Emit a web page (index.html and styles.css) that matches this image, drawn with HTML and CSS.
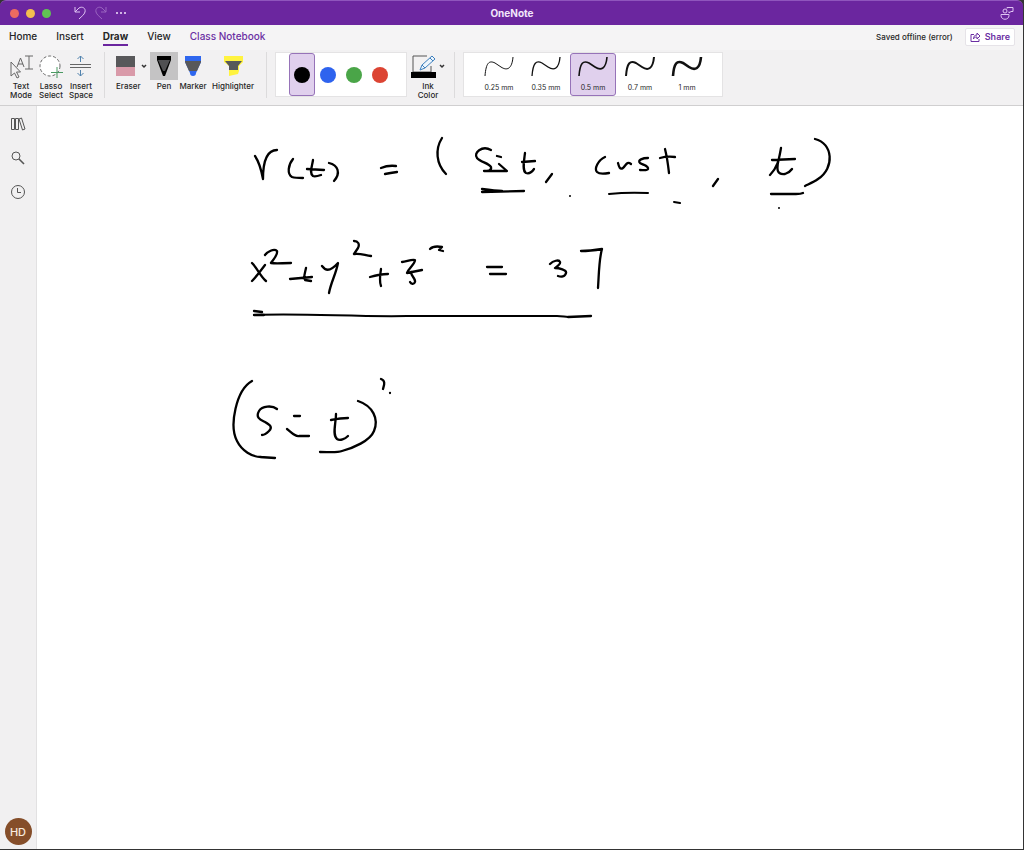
FILE: index.html
```html
<!DOCTYPE html>
<html lang="en">

<head>
    <meta charset="UTF-8">
    <meta name="viewport" content="width=device-width, initial-scale=1.0">
    <title>OneNote</title>
    <link rel="stylesheet" href="styles.css">
</head>

<body>
    <div class="window">
        <header class="titlebar">
            <div class="titlebar-left">
                <button class="light red" aria-label="Close"></button>
                <button class="light yellow" aria-label="Minimize"></button>
                <button class="light green" aria-label="Zoom"></button>
                <button class="undo" aria-label="Undo">
                    <svg width="14" height="16" viewBox="0 0 14 16"><path d="M2 2v5h5M2 7l4-4c3-2 7 0 6 4-1 3-3 4-6 7"/></svg>
                </button>
                <button class="redo" aria-label="Redo">
                    <svg width="14" height="16" viewBox="0 0 14 16"><path d="M12 2v5H7M12 7L8 3C5 1 1 3 2 7c1 3 3 4 6 7"/></svg>
                </button>
                <button class="more" aria-label="More">
                    <svg width="12" height="4" viewBox="0 0 12 4"><circle cx="2" cy="2" r="1"/><circle cx="6" cy="2" r="1"/><circle cx="10" cy="2" r="1"/></svg>
                </button>
            </div>
            <h1>OneNote</h1>
            <div class="titlebar-right">
                <button aria-label="Feedback">
                    <svg width="14" height="14" viewBox="0 0 14 14"><circle cx="5" cy="5" r="2"/><path d="M1 8.500h8v1c0 5-8 5-8 0zM7 1.500h6v4h-2L9 7V5.500M7 1.500v1"/></svg>
                </button>
            </div>
        </header>

        <nav class="tabs">
            <a href="#">Home</a>
            <a href="#">Insert</a>
            <a href="#" class="active">Draw</a>
            <a href="#">View</a>
            <a href="#" class="class-notebook">Class Notebook</a>
            <span class="status">Saved offline (error)</span>
            <button class="share">
                <svg width="11" height="10" viewBox="0 0 11 10"><path d="M4 2.500H1v7h8V7M7 1v2C4 3 3.500 5 3.500 7 4 5.500 5 5 7 5v2l3-3z"/></svg>
                Share
            </button>
        </nav>

        <div class="ribbon">
            <button class="tool">
                <svg width="28" height="28" viewBox="0 0 28 28" class="line"><path d="M4 10v14l3.500-3 2.500 5 2-1-2.500-5h4zM10 15l3.500-9 3.500 9M11 12h5M18 4h8M22 4v13M18 17h8"/></svg>
                <span>Text<br>Mode</span>
            </button>
            <button class="tool">
                <svg width="28" height="28" viewBox="0 0 28 28" class="line"><circle cx="13" cy="14" r="10" fill="#fff" stroke-dasharray="3 2"/><path d="M20 15v11M14 20.500h12" stroke="#4b9a63"/></svg>
                <span>Lasso<br>Select</span>
            </button>
            <button class="tool">
                <svg width="28" height="28" viewBox="0 0 28 28" class="line"><path d="M3 12.500h21M3 15.500h21"/><path d="M13.500 10V4m-3 3l3-3 3 3M13.500 18v6m-3-3l3 3 3-3" stroke="#5283ae"/></svg>
                <span>Insert<br>Space</span>
            </button>
            <div class="divider"></div>
            <button class="tool eraser">
                <svg width="34" height="28" viewBox="0 0 34 28"><path fill="#58585a" d="M0 4h19v11H0z"/><path fill="#d99aa9" d="M0 15h19v9H0z"/><path d="M26 13l2 2 2-2" fill="none" stroke="#333" stroke-width="1.500"/></svg>
                <span>Eraser</span>
            </button>
            <button class="tool pen">
                <svg width="28" height="28" viewBox="0 0 28 28" class="picked"><path d="M7 4h14v4l-6 16h-2L7 8z"/><path fill="#505052" d="M8 8h12l-5 11h-2z"/></svg>
                <span>Pen</span>
            </button>
            <button class="tool">
                <svg width="28" height="28" viewBox="0 0 28 28"><path fill="#2e66ee" d="M6 4h16v6l-5 11q0 3-3 3t-3-3L6 10z"/><path fill="#58585a" d="M6 9h16v1l-4 9h-8l-4-9z"/></svg>
                <span>Marker</span>
            </button>
            <button class="tool highlighter">
                <svg width="28" height="28" viewBox="0 0 28 28"><path fill="#fff33f" d="M5 4h19v6l-4 4v5l-1 3-9 2V14l-5-4z"/><path fill="#58585a" d="M6 9h17l-4 5v4h-9v-4z"/></svg>
                <span>Highlighter</span>
            </button>
            <div class="divider"></div>
            <div class="gallery colors">
                <button class="swatch selected" aria-label="Black"><i class="dot black"></i></button>
                <button class="swatch" aria-label="Blue"><i class="dot blue"></i></button>
                <button class="swatch" aria-label="Green"><i class="dot green"></i></button>
                <button class="swatch" aria-label="Red"><i class="dot red"></i></button>
            </div>
            <button class="tool ink-color">
                <svg width="36" height="28" viewBox="0 0 36 28"><path d="M17 4H3v16h18v-6" fill="none" stroke="#555"/><path d="M10 18l2-5L22 4l3 3-10 9zM20 6l3 3M12 13l3 3" fill="#edf5fc" stroke="#3d7fbd"/><path d="M1 20h25v6H1z"/><path d="M30 13l2 2 2-2" fill="none" stroke="#333" stroke-width="1.500"/></svg>
                <span>Ink<br>Color</span>
            </button>
            <div class="divider"></div>
            <div class="gallery widths">
                <button class="width">
                    <svg width="32" height="24" viewBox="0 0 32 24"><path d="M2 22C3 9 6 6 12 9l6 4c6 4 11 2 12-10" stroke-width="1"/></svg>
                    <span>0.25 mm</span>
                </button>
                <button class="width">
                    <svg width="32" height="24" viewBox="0 0 32 24"><path d="M2 22C3 9 6 6 12 9l6 4c6 4 11 2 12-10" stroke-width="1.300"/></svg>
                    <span>0.35 mm</span>
                </button>
                <button class="width selected">
                    <svg width="32" height="24" viewBox="0 0 32 24"><path d="M2 22C3 9 6 6 12 9l6 4c6 4 11 2 12-10" stroke-width="1.600"/></svg>
                    <span>0.5 mm</span>
                </button>
                <button class="width">
                    <svg width="32" height="24" viewBox="0 0 32 24"><path d="M2 22C3 9 6 6 12 9l6 4c6 4 11 2 12-10" stroke-width="2"/></svg>
                    <span>0.7 mm</span>
                </button>
                <button class="width">
                    <svg width="32" height="24" viewBox="0 0 32 24"><path d="M2 22C3 9 6 6 12 9l6 4c6 4 11 2 12-10" stroke-width="2.600"/></svg>
                    <span>1 mm</span>
                </button>
            </div>
        </div>

        <div class="content">
            <aside class="sidebar">
                <button aria-label="Notebooks">
                    <svg width="16" height="16" viewBox="0 0 16 16"><path d="M1.500 2.500h3v11h-3zM5.500 2.500h3v11h-3zM9 3l2.500-1 3.500 11-2.500 1z"/></svg>
                </button>
                <button aria-label="Search">
                    <svg width="16" height="16" viewBox="0 0 16 16"><circle cx="6" cy="6" r="4"/><path d="M9 9l5 5" stroke-width="1.600"/></svg>
                </button>
                <button aria-label="Recent">
                    <svg width="16" height="16" viewBox="0 0 16 16"><circle cx="8" cy="8" r="6.500"/><path d="M7.500 4v4.500H11"/></svg>
                </button>
                <button class="avatar">HD</button>
            </aside>
            <main class="page">
                <svg class="ink" width="630" height="345" viewBox="220 125 630 345" role="img" aria-label="Handwritten notes">
                    <!-- r(t) = ( sin t, cos t, t ) -->
                    <path d="M255 156c4 6 6 12 8 23 0-14 3-29 14-29"/>
                    <path d="M293 159c-5 6-6 15-1 18 3 1 6 1 11 1"/>
                    <path d="M313 160c-1 7-4 13 0 16 2 1 5 0 8-1M307 169l17 1"/>
                    <path d="M329 163c9 2 12 10 5 18M381 168q7-3 15-2M385 174q5-1 12-2"/>
                    <path d="M442 138c-7 11-6 26 4 36"/>
                    <path d="M491 150c-9-5-18 3-14 8 3 4 12 5 14 9 1 4-4 4-7 4h23l-8-7M497 156l4 1"/>
                    <path d="M525 153c-1 8-3 18 1 20 3 1 6-1 8-4M522 162l13-1M552 174l-6 8"/>
                    <path d="M482 189c7 1 14 2 20 2M482 192l42-1"/>
                    <path d="M605 157c-7 3-11 12-8 15 2 2 7 2 12 1"/>
                    <path d="M618 163c1 4 2 7 5 5 3-3 4-7 8-4M648 158c-5 0-11 2-8 5 3 2 9 3 8 6-1 2-5 1-8 1M665 149c2 8 3 15 4 24M660 158q7-2 15-1"/>
                    <path d="M609 194q18-2 39-1M674 202l6 1" class="thin"/>
                    <path d="M718 179l-5 7M781 148c-2 11-3 19-11 27M779 158c-3 12-2 17 6 16 3-1 5-2 7-5M772 160l23-1"/>
                    <path d="M815 139c18 4 20 29 3 40-4 3-9 5-13 7M771 194h25c4 0 5 0 7-1"/>
                    <path d="M570 196h0M779 208h0" class="thin"/>

                    <!-- x² + y² + z² = 37 -->
                    <path d="M252 263c5 5 9 14 14 18M265 265c-4 5-8 11-13 16"/>
                    <path d="M265 255c2-3 9-7 12-4 1 4-4 9-6 12 6 1 11 0 20 0M290 279l22-2M306 268c-1 5-3 10-1 12l6 1"/>
                    <path d="M322 266c3 4 7 7 16-3-2 11-7 19-9 30M354 241c4 0 6 3 4 7l-4 6c6-1 10 1 17 2"/>
                    <path d="M370 277q10-3 18-3M381 269c-1 6-2 12 0 17"/>
                    <path d="M402 262c4 0 9-3 13-2 0 4-6 8-8 13l15-3M411 272c0 4 5 7 4 10-1 3-4 2-5 0"/>
                    <path d="M430 249c3-3 7-3 12-2l-3 3 4 1"/>
                    <path d="M487 267h15M490 274h16M550 264c3-3 9-5 10-2 1 2-4 5-5 6 4 0 12 2 11 5-1 4-5 4-8 3"/>
                    <path d="M581 251c7 0 15-1 21-2-3 10-3 24-4 39"/>
                    <path d="M254 311l8 1M254 315h10"/>
                    <path d="M254 315c50-2 99 2 153 1l150 0c5 0 8 1 11 1" class="thin"/>
                    <path d="M568 317l23-1"/>

                    <!-- (sin t)² -->
                    <path d="M252 381c-16 9-23 45-15 60 5 10 15 16 24 16M260 457l15 1"/>
                    <path d="M277 409c-5-4-15-3-18 2-4 7 2 9 6 11 5 3 8 5 4 9-2 2-4 4-7 4M294 416h6M287 429c5 4 8 8 12 7h10"/>
                    <path d="M336 414c0 9-4 21 1 25 3 2 8 0 11-3M331 420c5-1 12-2 17-2"/>
                    <path d="M358 401c15 5 21 18 16 30-4 10-21 17-32 20-5 2-13 1-22 1M381 379c5 2 3 6 2 10M390 393h0"/>
                </svg>
            </main>
        </div>
    </div>
</body>

</html>
```
FILE: styles.css
```css
* {
    box-sizing: border-box;
}

body {
    margin: 0;
    background-color: #343434;
    font-family: Inter, "Liberation Sans", sans-serif;
    color: #262626;
}

button {
    padding: 0;
    border: none;
    background: none;
    font: inherit;
    color: inherit;
}

svg {
    display: block;
    flex: none;
}

.window {
    display: flex;
    flex-direction: column;
    min-height: 100vh;
    border-right: 1px solid #343434;
    border-bottom: 1px solid #343434;
}

/* title bar */
.titlebar {
    display: grid;
    grid-template-columns: 1fr auto 1fr;
    align-items: center;
    height: 25px;
    padding: 0 9px 0 10px;
    background-color: #6b269f;
    border-top: 1px solid #8f55bd;
    border-radius: 6px 6px 0 0;
    color: #f2e5fb;
}

.titlebar h1 {
    margin: 0;
    font-size: 10px;
    font-weight: 700;
}

.titlebar svg {
    fill: none;
    stroke: #e0c4f3;
}

.titlebar-left {
    display: flex;
    align-items: center;
    gap: 7px;
}

.titlebar-right {
    display: flex;
    justify-content: flex-end;
}

.light {
    width: 9px;
    height: 9px;
    border-radius: 50%;
}

.light.red {
    background-color: #ed6b60;
}

.light.yellow {
    background-color: #f5bf4f;
}

.light.green {
    background-color: #61c554;
}

.undo {
    margin-left: 15px;
}

.redo {
    opacity: 0.4;
}

.titlebar .more svg {
    fill: #f2e5fb;
    stroke: none;
}

/* tabs */
.tabs {
    display: flex;
    align-items: flex-start;
    gap: 19px;
    height: 25px;
    padding: 0 8px 0 9px;
    background-color: #f5f4f5;
    font-size: 10px;
    font-weight: 500;
    line-height: 22px;
}

.tabs a {
    height: 21px;
    color: #262626;
    text-decoration: none;
}

.tabs .active {
    border-bottom: 2px solid #6b269f;
    font-weight: 700;
}

.tabs .class-notebook {
    color: #6b2fa3;
}

.status {
    margin-left: auto;
    font-size: 8px;
    line-height: 25px;
}

.share {
    display: flex;
    align-items: center;
    gap: 4px;
    height: 18px;
    margin: 3px 0 0 -7px;
    padding: 0 4px;
    background-color: #fff;
    border: 1px solid #e6e3e8;
    border-radius: 2px;
    color: #6b2fa3;
    font-size: 9px;
    font-weight: 600;
}

.share svg {
    fill: none;
    stroke: #6b2fa3;
}

/* ribbon */
.ribbon {
    display: flex;
    align-items: flex-start;
    height: 56px;
    padding: 2px 6px;
    background-color: #f2f1f2;
    border-bottom: 1px solid #d0cfd0;
}

.tool {
    display: flex;
    flex-direction: column;
    align-items: center;
    gap: 2px;
    width: 30px;
    font-size: 8px;
    font-weight: 500;
    line-height: 9px;
    white-space: nowrap;
}

.line {
    fill: none;
    stroke: #666;
}

.eraser {
    align-items: flex-start;
    width: 34px;
}

.pen {
    width: 28px;
}

.picked {
    background-color: #c4c3c4;
}

.tool.highlighter {
    width: 50px;
}

.ink-color {
    width: 36px;
    margin-left: 3px;
}

.divider {
    width: 1px;
    height: 46px;
    margin: 0 8px;
    background-color: #dcdbdc;
}

.divider + .eraser {
    margin-left: 3px;
}

.gallery {
    display: flex;
    height: 45px;
    background-color: #fff;
    border: 1px solid #e4e3e4;
}

.colors {
    padding: 0 13px;
}

.swatch {
    display: grid;
    place-items: center;
    width: 26px;
    height: 43px;
}

.swatch,
.width {
    border: 1px solid transparent;
    border-radius: 3px;
}

.selected {
    background-color: #e0d0ed;
    border-color: #9673b8;
}

.dot {
    width: 16px;
    height: 16px;
    border-radius: 50%;
}

.dot.black {
    background-color: #000;
}

.dot.blue {
    background-color: #2e63ee;
}

.dot.green {
    background-color: #4aa548;
}

.dot.red {
    background-color: #dc4433;
}

.widths {
    gap: 1px;
    padding: 0 12px;
}

.width {
    display: flex;
    flex-direction: column;
    align-items: center;
    gap: 5px;
    width: 46px;
    font-size: 7px;
    line-height: 9px;
}

.width svg {
    fill: none;
    stroke: #111;
}

/* notebook */
.content {
    display: flex;
    flex: 1;
}

.sidebar {
    display: flex;
    flex-direction: column;
    align-items: center;
    gap: 18px;
    width: 37px;
    padding: 10px 0 4px;
    background-color: #f1f0f1;
    border-right: 1px solid #e2e1e2;
}

.sidebar svg {
    fill: none;
    stroke: #555;
}

.avatar {
    width: 27px;
    height: 27px;
    margin-top: auto;
    border-radius: 50%;
    background-color: #854e2a;
    color: #f8eadf;
    font-size: 11px;
    font-weight: 500;
}

.page {
    flex: 1;
    padding: 19px 0 0 183px;
    background-color: #fff;
}

.ink {
    fill: none;
    stroke: #000;
    stroke-width: 2.3px;
    stroke-linecap: round;
    stroke-linejoin: round;
}

.ink .thin {
    stroke-width: 2px;
}
```
